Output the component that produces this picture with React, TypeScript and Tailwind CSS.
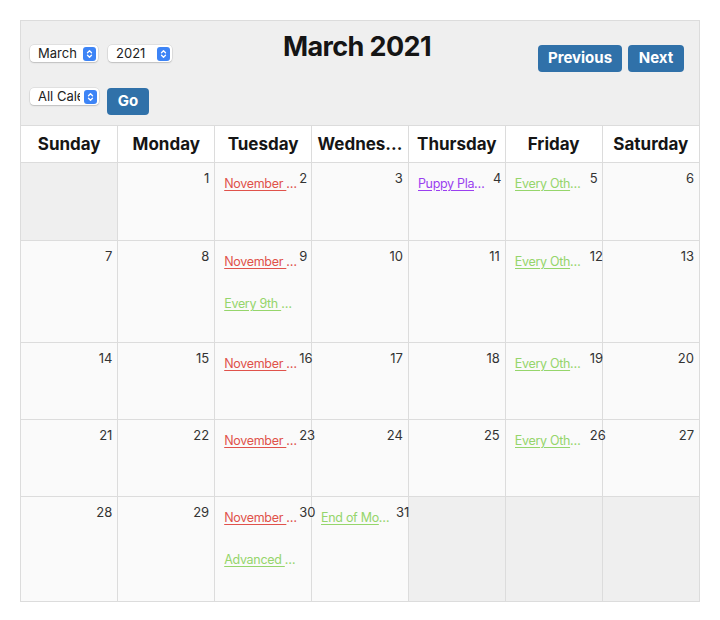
import React from 'react';

type Ev = { title: string; color: string };

const RED = 'text-[#e0524b] decoration-[#e0524b]';
const PURPLE = 'text-[#9a3ff0] decoration-[#9a3ff0]';
const GREEN = 'text-[#95d56b] decoration-[#95d56b]';

const DAYS = ['Sunday', 'Monday', 'Tuesday', 'Wednes...', 'Thursday', 'Friday', 'Saturday'];

const EVENTS: Record<number, Ev[]> = {
  2: [{ title: 'November Meetup Series', color: RED }],
  4: [{ title: 'Puppy Playdate', color: PURPLE }],
  5: [{ title: 'Every Other Friday', color: GREEN }],
  9: [
    { title: 'November Meetup Series', color: RED },
    { title: 'Every 9th and 10th', color: GREEN },
  ],
  12: [{ title: 'Every Other Friday', color: GREEN }],
  16: [{ title: 'November Meetup Series', color: RED }],
  19: [{ title: 'Every Other Friday', color: GREEN }],
  23: [{ title: 'November Meetup Series', color: RED }],
  26: [{ title: 'Every Other Friday', color: GREEN }],
  30: [
    { title: 'November Meetup Series', color: RED },
    { title: 'Advanced Recurrence', color: GREEN },
  ],
  31: [{ title: 'End of Month', color: GREEN }],
};

const ROW_HEIGHTS = ['h-[78px]', 'h-[102px]', 'h-[77px]', 'h-[77px]', 'h-[104px]'];

function Stepper() {
  return (
    <span className="flex h-[14px] w-[13px] shrink-0 items-center justify-center rounded-[3px] bg-[#3d84f6]">
      <svg width="7" height="10" viewBox="0 0 7 10" fill="none" stroke="white" strokeWidth="1.3" strokeLinecap="round" strokeLinejoin="round">
        <path d="M1.5 3.8 L3.5 1.8 L5.5 3.8" />
        <path d="M1.5 6.2 L3.5 8.2 L5.5 6.2" />
      </svg>
    </span>
  );
}

function Select({ label, width }: { label: string; width: string }) {
  return (
    <div className={`flex h-[17px] items-center gap-[4px] overflow-hidden rounded-[4px] bg-white pl-[8px] pr-[2px] shadow-[0_0_0_0.5px_rgba(0,0,0,0.12),0_1px_1.5px_rgba(0,0,0,0.15)] ${width}`}>
      <span className="min-w-0 flex-1 overflow-hidden whitespace-nowrap text-[13px] leading-none text-[#222]">{label}</span>
      <Stepper />
    </div>
  );
}

function BlueButton({ children, className }: { children: React.ReactNode; className: string }) {
  return (
    <button className={`flex h-[27px] items-center justify-center rounded-[4px] bg-[#3071a9] text-[15px] font-bold text-white ${className}`}>
      {children}
    </button>
  );
}

export default function App() {
  const cells: (number | null)[] = [null];
  for (let d = 1; d <= 31; d++) cells.push(d);
  while (cells.length < 35) cells.push(null);
  const weeks: (number | null)[][] = [];
  for (let i = 0; i < 35; i += 7) weeks.push(cells.slice(i, i + 7));

  return (
    <div className="min-h-[620px] bg-white p-[20px] font-['Inter',sans-serif] text-[#1a1a1a]">
      <div className="w-[680px] border border-[#dcdcdc]">
        <div className="flex h-[104px] bg-[#efefef]">
          <div className="flex w-[200px] flex-col pl-[9px] pt-[24px]">
            <div className="flex gap-[10px]">
              <Select label="March" width="w-[68px]" />
              <Select label="2021" width="w-[64px]" />
            </div>
            <div className="mt-[26px] flex items-start gap-[8px]">
              <Select label="All Calendars" width="w-[69px]" />
              <BlueButton className="w-[42px]">Go</BlueButton>
            </div>
          </div>
          <div className="flex-1 pt-[6px] text-center">
            <h1 className="ml-[-6px] text-[27px] font-bold tracking-[-0.6px] text-[#151515]">March 2021</h1>
          </div>
          <div className="flex w-[200px] justify-end gap-[6px] pr-[15px] pt-[24px]">
            <BlueButton className="w-[84px]">Previous</BlueButton>
            <BlueButton className="w-[56px]">Next</BlueButton>
          </div>
        </div>
        <table className="w-full table-fixed border-collapse">
          <thead>
            <tr className="h-[37px] bg-white">
              {DAYS.map((d) => (
                <th key={d} className="border border-[#dcdcdc] pt-[2px] text-[17px] font-bold text-[#151515] first:border-l-0 last:border-r-0">
                  {d}
                </th>
              ))}
            </tr>
          </thead>
          <tbody>
            {weeks.map((week, wi) => (
              <tr key={wi} className={ROW_HEIGHTS[wi]}>
                {week.map((day, di) => (
                  <td
                    key={di}
                    className={`border border-[#dcdcdc] p-0 align-top first:border-l-0 last:border-r-0 ${wi === 4 ? 'border-b-0' : ''} ${day === null ? 'bg-[#efefef]' : 'bg-[#fafafa]'}`}
                  >
                    {day !== null && (
                      <div className="flex justify-between gap-[2px] pl-[9px] pr-[5px] pt-[7px]">
                        <div className="flex w-[73px] flex-col gap-[26px] pt-[6px]">
                          {(EVENTS[day] ?? []).map((ev, i) => (
                            <a key={i} href="#" className={`block truncate text-[12.5px] leading-[16px] tracking-[-0.3px] underline underline-offset-2 ${ev.color}`}>
                              {ev.title}
                            </a>
                          ))}
                        </div>
                        <span className="text-[13px] leading-[16px] text-[#333]">{day}</span>
                      </div>
                    )}
                  </td>
                ))}
              </tr>
            ))}
          </tbody>
        </table>
      </div>
    </div>
  );
}
